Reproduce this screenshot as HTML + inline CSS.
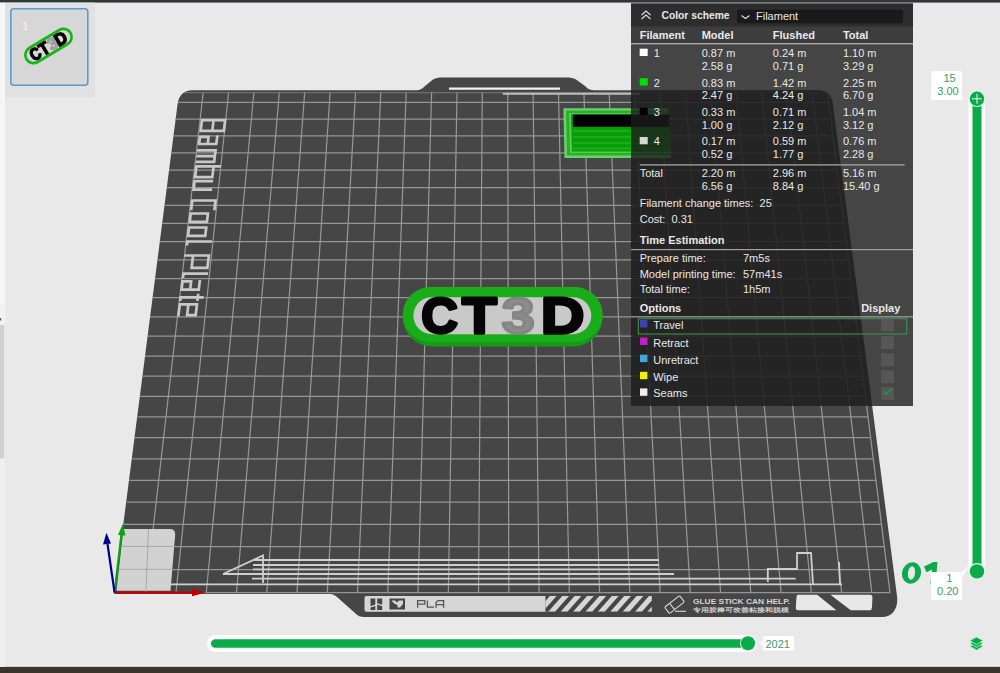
<!DOCTYPE html>
<html><head><meta charset="utf-8">
<style>
html,body{margin:0;padding:0;width:1000px;height:673px;overflow:hidden;background:#e9e9e9;}
svg{position:absolute;left:0;top:0;display:block;}
text{font-family:"Liberation Sans",sans-serif;}
</style></head><body>
<svg width="1000" height="673" viewBox="0 0 1000 673">
<rect x="0" y="0" width="1000" height="673" fill="#e9e9e9"/>
<defs><clipPath id="pc"><path d="M192,90.3 L415,90.3 C420,90.3 422,89 425,86 L433,79.5 C436,77.8 438,77.4 442,77.4 L567,77.4 C571,77.4 573,77.8 576,79.5 L585,86 C588,89 590,90.3 596,90.3 L818,90.3 C826,90.3 831,94 832.5,102 L897,596 C898.5,608 893,617 882,617 L365,617 C360,617 358,616 355,613 L337,597 C334,594.5 332,594 328,594 L114.3,594 L177.6,104 C179,95 184,90.3 192,90.3 Z"/></clipPath></defs><path d="M192,90.3 L415,90.3 C420,90.3 422,89 425,86 L433,79.5 C436,77.8 438,77.4 442,77.4 L567,77.4 C571,77.4 573,77.8 576,79.5 L585,86 C588,89 590,90.3 596,90.3 L818,90.3 C826,90.3 831,94 832.5,102 L897,596 C898.5,608 893,617 882,617 L365,617 C360,617 358,616 355,613 L337,597 C334,594.5 332,594 328,594 L114.3,594 L177.6,104 C179,95 184,90.3 192,90.3 Z" fill="#464647"/>
<g clip-path="url(#pc)"><g stroke="#989898" stroke-width="1.2"><line x1="203.2" y1="92.5" x2="145.8" y2="592.6"/><line x1="228.6" y1="92.5" x2="176.0" y2="592.6"/><line x1="253.9" y1="92.5" x2="206.3" y2="592.6"/><line x1="279.3" y1="92.5" x2="236.5" y2="592.6"/><line x1="304.7" y1="92.5" x2="266.8" y2="592.6"/><line x1="330.1" y1="92.5" x2="297.0" y2="592.6"/><line x1="355.5" y1="92.5" x2="327.3" y2="592.6"/><line x1="380.8" y1="92.5" x2="357.5" y2="592.6"/><line x1="406.2" y1="92.5" x2="387.8" y2="592.6"/><line x1="431.6" y1="92.5" x2="418.0" y2="592.6"/><line x1="457.0" y1="92.5" x2="448.3" y2="592.6"/><line x1="482.3" y1="92.5" x2="478.5" y2="592.6"/><line x1="507.7" y1="92.5" x2="508.8" y2="592.6"/><line x1="533.1" y1="92.5" x2="539.1" y2="592.6"/><line x1="558.5" y1="92.5" x2="569.3" y2="592.6"/><line x1="583.9" y1="92.5" x2="599.6" y2="592.6"/><line x1="609.2" y1="92.5" x2="629.8" y2="592.6"/><line x1="634.6" y1="92.5" x2="660.1" y2="592.6"/><line x1="660.0" y1="92.5" x2="690.3" y2="592.6"/><line x1="685.4" y1="92.5" x2="720.6" y2="592.6"/><line x1="710.8" y1="92.5" x2="750.8" y2="592.6"/><line x1="736.1" y1="92.5" x2="781.1" y2="592.6"/><line x1="761.5" y1="92.5" x2="811.3" y2="592.6"/><line x1="786.9" y1="92.5" x2="841.6" y2="592.6"/><line x1="812.3" y1="92.5" x2="871.8" y2="592.6"/><line x1="827.5" y1="92.5" x2="890.0" y2="592.6"/></g>
<g stroke="#959595" stroke-width="1.25"><line x1="115.5" y1="592.6" x2="890.0" y2="592.6"/><line x1="118.4" y1="569.5" x2="887.1" y2="569.5"/><line x1="121.2" y1="546.7" x2="884.3" y2="546.7"/><line x1="124.0" y1="524.3" x2="881.5" y2="524.3"/><line x1="126.8" y1="502.2" x2="878.7" y2="502.2"/><line x1="129.5" y1="480.4" x2="876.0" y2="480.4"/><line x1="132.2" y1="458.9" x2="873.3" y2="458.9"/><line x1="134.8" y1="437.7" x2="870.6" y2="437.7"/><line x1="137.4" y1="416.8" x2="868.0" y2="416.8"/><line x1="140.0" y1="396.3" x2="865.5" y2="396.3"/><line x1="142.5" y1="376.0" x2="862.9" y2="376.0"/><line x1="145.0" y1="356.0" x2="860.4" y2="356.0"/><line x1="147.4" y1="336.2" x2="858.0" y2="336.2"/><line x1="149.9" y1="316.8" x2="855.5" y2="316.8"/><line x1="152.3" y1="297.6" x2="853.1" y2="297.6"/><line x1="154.6" y1="278.6" x2="850.8" y2="278.6"/><line x1="156.9" y1="259.9" x2="848.4" y2="259.9"/><line x1="159.2" y1="241.5" x2="846.1" y2="241.5"/><line x1="161.5" y1="223.3" x2="843.8" y2="223.3"/><line x1="163.7" y1="205.3" x2="841.6" y2="205.3"/><line x1="166.0" y1="187.6" x2="839.4" y2="187.6"/><line x1="168.1" y1="170.1" x2="837.2" y2="170.1"/><line x1="170.3" y1="152.9" x2="835.0" y2="152.9"/><line x1="172.4" y1="135.8" x2="832.9" y2="135.8"/><line x1="174.5" y1="119.0" x2="830.8" y2="119.0"/><line x1="176.6" y1="102.4" x2="828.7" y2="102.4"/><line x1="177.8" y1="92.5" x2="827.5" y2="92.5" stroke-opacity="0.5"/></g>
<rect x="631" y="3.5" width="282" height="402.5" fill="#464647" fill-opacity="0.4"/></g>
<path d="M116.5,590.8 L123.4,528.9 L170,528.9 Q175.5,528.9 175.2,534.5 L170.5,590.8 Z" fill="#d2d2d2"/>
<g stroke="#a9a9a9" stroke-width="1"><line x1="148.5" y1="529" x2="146" y2="591"/><line x1="121" y1="546.4" x2="174" y2="546.4"/><line x1="119" y1="569.3" x2="172" y2="569.3"/></g>
<g stroke="#cfcfcf" stroke-width="1.8"><line x1="253" y1="560" x2="659" y2="560"/><line x1="253" y1="565" x2="659" y2="565"/><line x1="253" y1="569.4" x2="659" y2="569.4"/><line x1="223" y1="574" x2="674" y2="574"/><line x1="252" y1="578.6" x2="795.7" y2="578.6"/><line x1="171" y1="584.4" x2="842" y2="584.4"/><polyline points="223,574 263,555.5 263,583" fill="none"/><polyline points="767.8,582 767.8,569 797,569 797,553 811,553 813,584" fill="none"/><line x1="839" y1="562" x2="840" y2="584"/></g>
<g stroke-width="2.2" fill="none"><line x1="114.6" y1="592.6" x2="194" y2="592.6" stroke="#c00000"/><line x1="114.6" y1="592.6" x2="121.5" y2="534" stroke="#10a010"/><line x1="114.6" y1="592.6" x2="107.5" y2="544" stroke="#000090"/></g>
<path d="M192,588.8 L206,592.6 L192,596.2 Z" fill="#c00000"/><path d="M118,535 L122.8,523.8 L125.5,535.5 Z" fill="#10a010"/><path d="M103,544.5 L106.4,532.7 L111,543.5 Z" fill="#000090"/>
<line x1="449" y1="88.6" x2="560" y2="88.6" stroke="#f2f2f2" stroke-width="2.2"/>
<line x1="502.6" y1="93.8" x2="640" y2="93.8" stroke="#bdbdbd" stroke-width="2"/>
<rect x="364.5" y="596" width="185" height="15.7" rx="2" fill="#d6d6d6"/><rect x="545.4" y="596" width="106.4" height="15.7" fill="#464647"/>
<defs><clipPath id="hc"><rect x="545.4" y="596" width="106.4" height="15.7"/></clipPath></defs>
<g fill="#d6d6d6" clip-path="url(#hc)"><path d="M523.4,611.7 L537.4,596 L544.2,596 L530.2,611.7 Z"/><path d="M535.8,611.7 L549.8,596 L556.6,596 L542.6,611.7 Z"/><path d="M548.2,611.7 L562.2,596 L569.0,596 L555.0,611.7 Z"/><path d="M560.6,611.7 L574.6,596 L581.4,596 L567.4,611.7 Z"/><path d="M573.0,611.7 L587.0,596 L593.8,596 L579.8,611.7 Z"/><path d="M585.4,611.7 L599.4,596 L606.2,596 L592.2,611.7 Z"/><path d="M597.8,611.7 L611.8,596 L618.6,596 L604.6,611.7 Z"/><path d="M610.2,611.7 L624.2,596 L631.0,596 L617.0,611.7 Z"/><path d="M622.6,611.7 L636.6,596 L643.4,596 L629.4,611.7 Z"/><path d="M635.0,611.7 L649.0,596 L655.8,596 L641.8,611.7 Z"/><path d="M647.4,611.7 L661.4,596 L668.2,596 L654.2,611.7 Z"/><path d="M659.8,611.7 L673.8,596 L680.6,596 L666.6,611.7 Z"/></g>
<g fill="#464647"><path d="M370.5,598.5 L375.3,598.5 L375.3,604.6 L370.5,606.2 Z"/><path d="M370.5,607.6 L375.3,606 L375.3,610 L370.5,610 Z"/><path d="M377.2,598.5 L382.2,598.5 L382.2,604.8 L377.2,603.2 Z"/><path d="M377.2,604.6 L382.2,606.2 L382.2,610 L377.2,610 Z"/><rect x="389.5" y="598.5" width="15.5" height="11"/></g>
<path d="M391.5,600.5 L395,600.5 L397,602.5 L399,600.5 L403,600.5 L403,604 L400,607.5 L397.5,607.5 L397.5,605 L394,603.5 Z" fill="#d6d6d6"/>
<path d="M417.6,607.8 L417.6,600.6 L424.8,600.6 L424.8,604.2 L417.6,604.2 M427.4,600.6 L427.4,607.2 L434,607.2 M436,607.8 L436,602.6 L438,600.6 L443.6,600.6 L443.6,607.8 M436,604.6 L443.6,604.6" fill="none" stroke="#555" stroke-width="1.3"/>
<g stroke="#d8d8d8" stroke-width="1.1" fill="none"><g transform="translate(674.5,604.6) rotate(-38)"><rect x="-9.5" y="-4" width="19" height="8" rx="1.2"/><line x1="-3" y1="-4" x2="-3" y2="4"/></g><line x1="675" y1="611.3" x2="686" y2="611.3"/></g>
<text x="693" y="604" font-family="Liberation Sans, sans-serif" font-weight="bold" font-size="6.3" fill="#d4d4d4" textLength="97" lengthAdjust="spacingAndGlyphs">GLUE STICK CAN HELP.</text>
<text x="693" y="611.5" font-family="Liberation Sans, sans-serif" font-weight="bold" font-size="6.3" fill="#cfcfcf" textLength="96" lengthAdjust="spacingAndGlyphs">专用胶棒可改善粘接和脱模</text>
<path d="M798,594.8 L817.2,594.8 L836.4,610.2 L798,610.2 Q795.6,610.2 795.8,607.5 L796.5,597 Q796.7,594.8 798,594.8 Z" fill="#e8e8e8"/><path d="M830.4,594.8 L870,594.8 Q872.6,594.8 872.4,597.5 L872,607.5 Q871.8,610.2 869.5,610.2 L850.8,610.2 Z" fill="#e8e8e8"/>
<rect x="402.7" y="287.1" width="199.9" height="59.5" rx="29.75" fill="#149a14"/>
<rect x="402.7" y="287.1" width="199.9" height="55" rx="27.5" fill="#1aad1a"/>
<rect x="413.4" y="297.2" width="177.9" height="37" rx="18.5" fill="#c9c9c9"/>
<path d="M795 212Q1062 212 1166 480L1423 383Q1340 179 1179.5 79.5Q1019 -20 795 -20Q455 -20 269.5 172.5Q84 365 84 711Q84 1058 263.0 1244.0Q442 1430 782 1430Q1030 1430 1186.0 1330.5Q1342 1231 1405 1038L1145 967Q1112 1073 1015.5 1135.5Q919 1198 788 1198Q588 1198 484.5 1074.0Q381 950 381 711Q381 468 487.5 340.0Q594 212 795 212Z" fill="#050505" transform="matrix(0.02465,0,0,-0.02407,421.33,332.62)" stroke="#050505" stroke-width="3.2" vector-effect="non-scaling-stroke" stroke-linejoin="round"/><path d="M773 1181V0H478V1181H23V1409H1229V1181Z" fill="#050505" transform="matrix(0.02794,0,0,-0.02477,461.96,333.10)" stroke="#050505" stroke-width="3.2" vector-effect="non-scaling-stroke" stroke-linejoin="round"/><path d="M1065 391Q1065 193 935.0 85.0Q805 -23 565 -23Q338 -23 204.0 81.5Q70 186 47 383L333 408Q360 205 564 205Q665 205 721.0 255.0Q777 305 777 408Q777 502 709.0 552.0Q641 602 507 602H409V829H501Q622 829 683.0 878.5Q744 928 744 1020Q744 1107 695.5 1156.5Q647 1206 554 1206Q467 1206 413.5 1158.0Q360 1110 352 1022L71 1042Q93 1224 222.0 1327.0Q351 1430 559 1430Q780 1430 904.5 1330.5Q1029 1231 1029 1055Q1029 923 951.5 838.0Q874 753 728 725V721Q890 702 977.5 614.5Q1065 527 1065 391Z" fill="#8c8c8c" transform="matrix(0.02898,0,0,-0.02402,501.74,332.55)" stroke="#858585" stroke-width="3.2" vector-effect="non-scaling-stroke" stroke-linejoin="round"/><path d="M1393 715Q1393 497 1307.5 334.5Q1222 172 1065.5 86.0Q909 0 707 0H137V1409H647Q1003 1409 1198.0 1229.5Q1393 1050 1393 715ZM1096 715Q1096 942 978.0 1061.5Q860 1181 641 1181H432V228H682Q872 228 984.0 359.0Q1096 490 1096 715Z" fill="#050505" transform="matrix(0.02962,0,0,-0.02477,540.74,333.10)" stroke="#050505" stroke-width="3.2" vector-effect="non-scaling-stroke" stroke-linejoin="round"/>
<path d="M563.4,108.2 L668,108.2 L671,158 L564.5,158 Z" fill="#6fcf6f"/>
<path d="M566,110.5 L668,110.5 L670.5,155.5 L567,155.5 Z" fill="#22b522"/>
<path d="M569,113 L668,113 L670,153 L570,153 Z" fill="#58c858"/>
<path d="M571,114.5 L668,114.5 L670,151.5 L572,151.5 Z" fill="#0a9a0a"/>
<rect x="572.9" y="114.5" width="96" height="12.3" fill="#000"/>
<line x1="573" y1="131" x2="670" y2="131" stroke="#16b016" stroke-width="2.5"/>
<line x1="573" y1="137" x2="670" y2="137" stroke="#16b016" stroke-width="2.5"/>
<line x1="573" y1="143" x2="670" y2="143" stroke="#16b016" stroke-width="2.5"/>
<line x1="573" y1="148.5" x2="670" y2="148.5" stroke="#16b016" stroke-width="2.5"/>
<path d="M1.4,120.1 L24.6,120.1 L24.6,130.9 L1.4,130.9 L1.4,120.1 M13.0,120.1 L13.0,130.9 M18.6,136.8 L18.6,144.0 L1.4,144.0 L1.4,136.8 L10.0,136.8 L10.0,144.0 M1.4,150.3 L18.6,150.3 L18.6,161.8 L1.4,161.8 M18.6,156.1 L1.4,156.1 M24.6,166.3 L1.4,166.3 L1.4,177.2 L18.6,177.2 L18.6,166.3 M18.6,181.2 L1.4,181.2 L1.4,189.6 L18.6,189.6 M1.4,208.9 L1.4,200.5 L24.6,200.5 L24.6,208.9 M1.4,213.5 L18.6,213.5 L18.6,221.9 L1.4,221.9 L1.4,213.5 M1.4,227.5 L18.6,227.5 L18.6,235.9 L1.4,235.9 L1.4,227.5 M24.6,241.5 L1.4,241.5 L1.4,244.2 M1.4,255.5 L24.6,255.5 L24.6,267.8 L8.8,267.8 L8.8,255.5 M24.6,273.7 L1.4,273.7 L1.4,276.7 M18.6,281.4 L18.6,289.6 L1.4,289.6 L1.4,281.4 L10.0,281.4 L10.0,289.6 M23.0,297.3 L1.4,297.3 L1.4,299.6 M18.6,295.1 L18.6,299.6 M10.0,315.1 L18.6,315.1 L18.6,304.4 L1.4,304.4 L1.4,315.1 M10.0,304.4 L10.0,315.1" fill="none" stroke="#c8c8c8" stroke-width="2.7" stroke-linejoin="miter" stroke-linecap="square" transform="matrix(1,0,-0.1205,1,215.06,0)"/>
<rect x="631" y="3.5" width="282" height="402.5" fill="#1c1c1c" fill-opacity="0.80"/>
<rect x="631" y="3.5" width="282" height="23" fill="#2c2c2c" fill-opacity="0.95"/>
<rect x="631" y="26.5" width="282" height="17" fill="#2a2a2a" fill-opacity="0.3"/>
<rect x="737" y="9.7" width="166" height="13.5" rx="1.5" fill="#1a1a1a"/>
<g stroke="#dddddd" stroke-width="1.2" fill="none"><polyline points="641.5,15 646,11 650.5,15"/><polyline points="641.5,19 646,15 650.5,19"/><polyline points="741.5,15.5 745.5,18.5 749.5,15.5"/></g>
<text x="661.5" y="18.7" font-size="11" fill="#e8e8e8" font-weight="bold" textLength="68" lengthAdjust="spacingAndGlyphs">Color scheme</text>
<text x="756" y="20" font-size="11" fill="#e8e8e8" >Filament</text>
<text x="639.7" y="38.7" font-size="11" fill="#e8e8e8" font-weight="bold" >Filament</text>
<text x="701.7" y="38.7" font-size="11" fill="#e8e8e8" font-weight="bold" >Model</text>
<text x="772.8" y="38.7" font-size="11" fill="#e8e8e8" font-weight="bold" >Flushed</text>
<text x="842.9" y="38.7" font-size="11" fill="#e8e8e8" font-weight="bold" >Total</text>
<rect x="631" y="43" width="282" height="1.4" fill="#a8a8a8"/>
<rect x="639.7" y="48.7" width="8" height="7.3" fill="#ffffff"/>
<text x="653.7" y="57" font-size="11" fill="#e8e8e8" >1</text>
<text x="701.7" y="57" font-size="11" fill="#e8e8e8" >0.87 m</text>
<text x="701.7" y="69.7" font-size="11" fill="#e8e8e8" >2.58 g</text>
<text x="772.8" y="57" font-size="11" fill="#e8e8e8" >0.24 m</text>
<text x="772.8" y="69.7" font-size="11" fill="#e8e8e8" >0.71 g</text>
<text x="842.9" y="57" font-size="11" fill="#e8e8e8" >1.10 m</text>
<text x="842.9" y="69.7" font-size="11" fill="#e8e8e8" >3.29 g</text>
<rect x="639.7" y="78.2" width="8" height="7.3" fill="#00e000"/>
<text x="653.7" y="86.5" font-size="11" fill="#e8e8e8" >2</text>
<text x="701.7" y="86.5" font-size="11" fill="#e8e8e8" >0.83 m</text>
<text x="701.7" y="99.2" font-size="11" fill="#e8e8e8" >2.47 g</text>
<text x="772.8" y="86.5" font-size="11" fill="#e8e8e8" >1.42 m</text>
<text x="772.8" y="99.2" font-size="11" fill="#e8e8e8" >4.24 g</text>
<text x="842.9" y="86.5" font-size="11" fill="#e8e8e8" >2.25 m</text>
<text x="842.9" y="99.2" font-size="11" fill="#e8e8e8" >6.70 g</text>
<rect x="639.7" y="107.7" width="8" height="7.3" fill="#000000"/>
<text x="653.7" y="116" font-size="11" fill="#e8e8e8" >3</text>
<text x="701.7" y="116" font-size="11" fill="#e8e8e8" >0.33 m</text>
<text x="701.7" y="128.7" font-size="11" fill="#e8e8e8" >1.00 g</text>
<text x="772.8" y="116" font-size="11" fill="#e8e8e8" >0.71 m</text>
<text x="772.8" y="128.7" font-size="11" fill="#e8e8e8" >2.12 g</text>
<text x="842.9" y="116" font-size="11" fill="#e8e8e8" >1.04 m</text>
<text x="842.9" y="128.7" font-size="11" fill="#e8e8e8" >3.12 g</text>
<rect x="639.7" y="137.0" width="8" height="7.3" fill="#d8d8d8"/>
<text x="653.7" y="145.3" font-size="11" fill="#e8e8e8" >4</text>
<text x="701.7" y="145.3" font-size="11" fill="#e8e8e8" >0.17 m</text>
<text x="701.7" y="158.0" font-size="11" fill="#e8e8e8" >0.52 g</text>
<text x="772.8" y="145.3" font-size="11" fill="#e8e8e8" >0.59 m</text>
<text x="772.8" y="158.0" font-size="11" fill="#e8e8e8" >1.77 g</text>
<text x="842.9" y="145.3" font-size="11" fill="#e8e8e8" >0.76 m</text>
<text x="842.9" y="158.0" font-size="11" fill="#e8e8e8" >2.28 g</text>
<rect x="639.7" y="164.3" width="265" height="1.2" fill="#b0b0b0"/>
<text x="639.7" y="177.2" font-size="11" fill="#e8e8e8" >Total</text>
<text x="701.7" y="177.2" font-size="11" fill="#e8e8e8" >2.20 m</text>
<text x="701.7" y="190" font-size="11" fill="#e8e8e8" >6.56 g</text>
<text x="772.8" y="177.2" font-size="11" fill="#e8e8e8" >2.96 m</text>
<text x="772.8" y="190" font-size="11" fill="#e8e8e8" >8.84 g</text>
<text x="842.9" y="177.2" font-size="11" fill="#e8e8e8" >5.16 m</text>
<text x="842.9" y="190" font-size="11" fill="#e8e8e8" >15.40 g</text>
<text x="639.7" y="206.8" font-size="11" fill="#e8e8e8" >Filament change times:&#160; 25</text>
<text x="639.7" y="222.7" font-size="11" fill="#e8e8e8" >Cost:&#160; 0.31</text>
<text x="639.7" y="244" font-size="11" fill="#e8e8e8" font-weight="bold" >Time Estimation</text>
<rect x="631" y="249" width="282" height="1.2" fill="#a0a0a0"/>
<text x="639.7" y="262.4" font-size="11" fill="#e8e8e8" >Prepare time:</text>
<text x="743" y="262.4" font-size="11" fill="#e8e8e8" >7m5s</text>
<text x="639.7" y="277.7" font-size="11" fill="#e8e8e8" >Model printing time:</text>
<text x="743" y="277.7" font-size="11" fill="#e8e8e8" >57m41s</text>
<text x="639.7" y="293.3" font-size="11" fill="#e8e8e8" >Total time:</text>
<text x="743" y="293.3" font-size="11" fill="#e8e8e8" >1h5m</text>
<text x="639.7" y="311.5" font-size="11" fill="#e8e8e8" font-weight="bold" >Options</text>
<text x="900.3" y="311.5" font-size="11" fill="#e8e8e8" font-weight="bold" text-anchor="end" >Display</text>
<rect x="631" y="316.2" width="282" height="1.2" fill="#a0a0a0"/>
<rect x="638.3" y="318.7" width="268.5" height="15.3" fill="none" stroke="#3f9a4f" stroke-width="1"/>
<rect x="640" y="320" width="7.4" height="7.4" fill="#4040b0"/>
<text x="653.2" y="329" font-size="11" fill="#e8e8e8" >Travel</text>
<rect x="881" y="318.5" width="13" height="13" rx="1" fill="#5c5c5c" fill-opacity="0.75"/>
<rect x="640" y="337.6" width="7.4" height="7.4" fill="#c020c8"/>
<text x="653.2" y="346.6" font-size="11" fill="#e8e8e8" >Retract</text>
<rect x="881" y="336.1" width="13" height="13" rx="1" fill="#5c5c5c" fill-opacity="0.75"/>
<rect x="640" y="354.7" width="7.4" height="7.4" fill="#40a8d8"/>
<text x="653.2" y="363.7" font-size="11" fill="#e8e8e8" >Unretract</text>
<rect x="881" y="353.2" width="13" height="13" rx="1" fill="#5c5c5c" fill-opacity="0.75"/>
<rect x="640" y="371.8" width="7.4" height="7.4" fill="#f0f000"/>
<text x="653.2" y="380.8" font-size="11" fill="#e8e8e8" >Wipe</text>
<rect x="881" y="370.3" width="13" height="13" rx="1" fill="#5c5c5c" fill-opacity="0.75"/>
<rect x="640" y="388.4" width="7.4" height="7.4" fill="#eeeeee"/>
<text x="653.2" y="397.4" font-size="11" fill="#e8e8e8" >Seams</text>
<rect x="881" y="386.9" width="13" height="13" rx="1" fill="#5c5c5c" fill-opacity="0.75"/>
<polyline points="884,391.5 886.5,394 891.5,389" stroke="#1a9a4a" stroke-width="1.6" fill="none"/>
<rect x="0" y="0" width="1000" height="2.6" fill="#2f3838"/>
<rect x="0" y="665.6" width="1000" height="1.3" fill="#f6f6f6"/><rect x="0" y="666.8" width="1000" height="6.2" fill="#3a3429"/>
<rect x="0" y="2.6" width="5" height="303" fill="#f6f6f6"/>
<rect x="0" y="304" width="5.5" height="21" fill="#f1f1f1"/><rect x="0" y="318" width="1.2" height="2.5" fill="#555"/><rect x="0" y="325" width="4" height="133.5" fill="#d0d0d0"/><rect x="0" y="458.5" width="5" height="208.5" fill="#efefef"/>
<rect x="5" y="2.6" width="90" height="94.5" fill="#e1e1e1"/>
<rect x="10.8" y="8.8" width="77" height="76.5" rx="3" fill="#d7d7d7" stroke="#5b9ad6" stroke-width="1.6"/>
<text x="22.5" y="30" font-size="11" fill="#f4f4f4" >1</text>
<g transform="translate(48.5,46) rotate(-31)">
<rect x="-27" y="-9.5" width="54" height="19" rx="9.5" fill="#18b418"/>
<rect x="-24.3" y="-6.8" width="48.6" height="13.6" rx="6.8" fill="#d8d8d8"/>
<path d="M795 212Q1062 212 1166 480L1423 383Q1340 179 1179.5 79.5Q1019 -20 795 -20Q455 -20 269.5 172.5Q84 365 84 711Q84 1058 263.0 1244.0Q442 1430 782 1430Q1030 1430 1186.0 1330.5Q1342 1231 1405 1038L1145 967Q1112 1073 1015.5 1135.5Q919 1198 788 1198Q588 1198 484.5 1074.0Q381 950 381 711Q381 468 487.5 340.0Q594 212 795 212Z" fill="#000" transform="matrix(0.00709,0,0,-0.00828,-20.60,5.83)" stroke="#000" stroke-width="1.3" vector-effect="non-scaling-stroke"/><path d="M773 1181V0H478V1181H23V1409H1229V1181Z" fill="#000" transform="matrix(0.00746,0,0,-0.00852,-9.67,6.00)" stroke="#000" stroke-width="1.3" vector-effect="non-scaling-stroke"/><path d="M1065 391Q1065 193 935.0 85.0Q805 -23 565 -23Q338 -23 204.0 81.5Q70 186 47 383L333 408Q360 205 564 205Q665 205 721.0 255.0Q777 305 777 408Q777 502 709.0 552.0Q641 602 507 602H409V829H501Q622 829 683.0 878.5Q744 928 744 1020Q744 1107 695.5 1156.5Q647 1206 554 1206Q467 1206 413.5 1158.0Q360 1110 352 1022L71 1042Q93 1224 222.0 1327.0Q351 1430 559 1430Q780 1430 904.5 1330.5Q1029 1231 1029 1055Q1029 923 951.5 838.0Q874 753 728 725V721Q890 702 977.5 614.5Q1065 527 1065 391Z" fill="#aaa" transform="matrix(0.00786,0,0,-0.00826,0.13,5.81)" stroke="#999" stroke-width="1.3" vector-effect="non-scaling-stroke"/><path d="M1393 715Q1393 497 1307.5 334.5Q1222 172 1065.5 86.0Q909 0 707 0H137V1409H647Q1003 1409 1198.0 1229.5Q1393 1050 1393 715ZM1096 715Q1096 942 978.0 1061.5Q860 1181 641 1181H432V228H682Q872 228 984.0 359.0Q1096 490 1096 715Z" fill="#000" transform="matrix(0.00796,0,0,-0.00852,8.41,6.00)" stroke="#000" stroke-width="1.3" vector-effect="non-scaling-stroke"/>
</g>
<rect x="968.5" y="92" width="16.5" height="487" rx="8" fill="#ffffff"/>
<rect x="972.5" y="100" width="9" height="468" fill="#0aab4a"/>
<circle cx="977" cy="98.8" r="8.3" fill="#dff7e6"/><circle cx="977" cy="98.8" r="7.2" fill="#0aab4a"/>
<g stroke="#e8fff0" stroke-width="1"><line x1="972" y1="98.8" x2="982" y2="98.8"/><line x1="977" y1="93.8" x2="977" y2="103.8"/></g>
<circle cx="977" cy="571.4" r="8.3" fill="#dff7e6"/><circle cx="977" cy="571.4" r="7.2" fill="#0aab4a"/>
<path d="M931.2,71.2 L962,71.2 L962,98.8 L968,98.8 L960,100 L931.2,100 Z" fill="#ffffff"/>
<text x="949.5" y="82.3" font-size="11" fill="#3a9a6e" text-anchor="middle" >15</text>
<text x="948" y="95.3" font-size="11" fill="#3a9a6e" text-anchor="middle" >3.00</text>
<g transform="translate(911.5,573) skewX(-5)"><path fill="#0aab4a" fill-rule="evenodd" d="M-9.6,0 A9.6,10.7 0 1 0 9.6,0 A9.6,10.7 0 1 0 -9.6,0 Z M-3.6,0 A3.6,6.8 0 1 0 3.6,0 A3.6,6.8 0 1 0 -3.6,0 Z"/></g>
<path fill="#0aab4a" d="M924,566.5 L933.5,562 L937.5,562 L935.5,584 L930.5,584 L932,569.5 L926.5,572.3 Z"/>
<path d="M931,572 L962,572 L969,566 L962,577 L962,600 L931,600 Z" fill="#ffffff"/>
<text x="949.4" y="582.4" font-size="11" fill="#3a9a6e" text-anchor="middle" >1</text>
<text x="947.8" y="595" font-size="11" fill="#3a9a6e" text-anchor="middle" >0.20</text>
<rect x="207" y="635" width="550" height="17" rx="8.5" fill="#ffffff"/>
<rect x="211" y="639.3" width="540" height="8.5" rx="4.25" fill="#0aab4a"/>
<circle cx="748" cy="643.3" r="8" fill="#dff7e6"/><circle cx="748" cy="643.3" r="7" fill="#0aab4a"/>
<path d="M763,636 L794,636 L794,650.5 L763,650.5 L763,646 L759.5,643.3 L763,640.5 Z" fill="#ffffff"/>
<text x="765.5" y="647.5" font-size="11" fill="#3a9a6e" >2021</text>
<g fill="#0aab4a" stroke="#c8f5d6" stroke-width="0.8" stroke-linejoin="round"><path d="M969.8,646.2 L976.5,642.6 L983.2,646.2 L976.5,650.2 Z"/><path d="M969.8,643.3 L976.5,639.7 L983.2,643.3 L976.5,647.3 Z"/><path d="M969.8,640.6 L976.5,637 L983.2,640.6 L976.5,644.6 Z"/></g>
</svg>
</body></html>
